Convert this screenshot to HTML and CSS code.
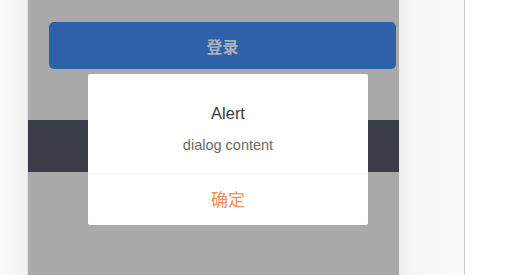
FILE: index.html
```html
<!DOCTYPE html>
<html lang="zh">
<head>
<meta charset="utf-8">
<link rel="stylesheet" href="styles.css">
</head>
<body>
<div class="stage">
  <div class="side side-left"></div>
  <div class="phone">
    <div class="login-btn">登录</div>
    <div class="band"></div>
    <div class="dialog">
      <div class="dialog-body">
        <div class="dialog-title">Alert</div>
        <div class="dialog-content">dialog content</div>
      </div>
      <div class="dialog-footer">确定</div>
    </div>
  </div>
  <div class="side side-right"></div>
  <div class="blank"></div>
</div>
</body>
</html>
```
FILE: styles.css
```css
html, body {
  margin: 0;
  padding: 0;
  height: 100%;
  overflow: hidden;
}
body {
  font-family: "Liberation Sans", Arial, "Noto Sans CJK SC", sans-serif;
  background: #fff;
}
.stage {
  display: flex;
  height: 275px;
}
.side-left {
  width: 27px;
  background: linear-gradient(to right, #fbfbfb, #f1f1f1);
  border-right: 1px solid #e4e4e4;
}
.phone {
  position: relative;
  width: 371px;
  background: #a9a9aa;
  display: flex;
  flex-direction: column;
}
.login-btn {
  margin: 22px 3px 0 21px;
  height: 47px;
  border-radius: 5px;
  background: #2e61a8;
  color: #a9b0bd;
  font-weight: bold;
  font-size: 16px;
  display: flex;
  align-items: center;
  justify-content: center;
  font-family: "Noto Sans CJK SC", sans-serif;
}
.band {
  margin-top: 51px;
  height: 52px;
  background: #3b3d48;
}
.dialog {
  position: absolute;
  left: 60px;
  top: 74px;
  width: 280px;
  height: 151px;
  background: #fff;
  border-radius: 2px;
  display: flex;
  flex-direction: column;
}
.dialog-body {
  height: 99px;
  display: flex;
  flex-direction: column;
  align-items: center;
  border-bottom: 1px solid #f5f5f5;
}
.dialog-title {
  margin-top: 29px;
  font-size: 16.5px;
  line-height: 20px;
  color: #3a3a3a;
}
.dialog-content {
  margin-top: 13px;
  font-size: 14.5px;
  line-height: 18px;
  color: #6a6a6a;
}
.dialog-footer {
  flex: 1;
  display: flex;
  align-items: center;
  justify-content: center;
  padding-bottom: 2px;
  font-size: 17px;
  color: #f78b50;
  font-family: "Noto Sans CJK SC", sans-serif;
}
.side-right {
  width: 65px;
  background: linear-gradient(to right, #efefef, #f7f7f7 25%, #fafafa);
  border-right: 1px solid #cdcdcd;
}
.blank {
  flex: 1;
  background: #fff;
}
```
